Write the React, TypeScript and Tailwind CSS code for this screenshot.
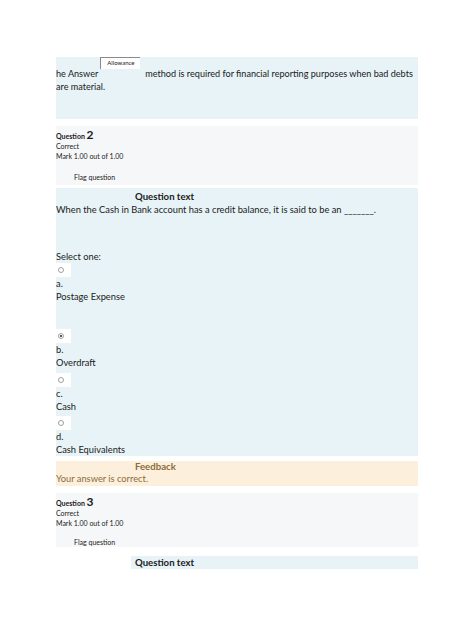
import React from "react";

const font = { fontFamily: "Lato, 'Open Sans', sans-serif" };

function Info({ n, flagTop, bottom }: { n: number; flagTop: string; bottom: string }) {
  return (
    <div className={`bg-[#f6f7f8] pt-[3px] text-[#1a1a1a] ${bottom}`}>
      <div className="flex h-[12px] items-baseline leading-[12px]">
        <span className="text-[7px] font-bold">Question&nbsp;</span>
        <span className="text-[12px] font-bold">{n}</span>
      </div>
      <div className="text-[7px] leading-[10px]">Correct</div>
      <div className="text-[7px] leading-[10px]">Mark 1.00 out of 1.00</div>
      <div className={`pl-[18px] text-[7px] leading-[10px] ${flagTop}`}>Flag question</div>
    </div>
  );
}

function Radio({ checked }: { checked?: boolean }) {
  return (
    <div className="flex h-[14px] w-[15px] items-center bg-white pl-[2px]">
      <span className="flex h-[6px] w-[6px] items-center justify-center rounded-full border border-[#a0a0a0] bg-white">
        {checked && <span className="h-[2px] w-[2px] rounded-full bg-[#222]" />}
      </span>
    </div>
  );
}

function Option({ letter, label, checked, gap }: { letter: string; label: string; checked?: boolean; gap: string }) {
  return (
    <div className={gap}>
      <Radio checked={checked} />
      <div className="leading-[13px]">{letter}.</div>
      <div className="leading-[13px]">{label}</div>
    </div>
  );
}

export default function App() {
  return (
    <div className="min-h-[632px] w-[474px] bg-white text-[9.3px] text-[#1a1a1a]" style={font}>
      <div className="ml-[56px] w-[362px] pt-[57px]">
        <div className="h-[62px] bg-[#e7f3f6] text-[9.1px] leading-[13px]">
          he Answer
          <span className="ml-[2px] mr-[5px] inline-block w-[40px] border-l border-t border-[#8a8a8a] bg-white pb-[3px] pl-[6px] pt-[1px] align-[12px] text-[6px] leading-[7px]">
            Allowance
          </span>
          method is required for financial reporting purposes when bad debts are material.
        </div>

        <div className="mt-[7px]">
          <Info n={2} flagTop="pt-[11px]" bottom="pb-[3px]" />
        </div>

        <div className="mt-[3px] h-[268px] bg-[#e7f3f6]">
          <div className="pl-[79px] pt-[2px] text-[9.6px] font-bold leading-[13px]">Question text</div>
          <div className="leading-[13px]">
            When the Cash in Bank account has a credit balance, it is said to be an _______.
          </div>
          <div className="mt-[34px] leading-[13px]">Select one:</div>
          <Option letter="a" label="Postage Expense" gap="mt-[0px]" />
          <Option letter="b" label="Overdraft" checked gap="mt-[26px]" />
          <Option letter="c" label="Cash" gap="mt-[4px]" />
          <Option letter="d" label="Cash Equivalents" gap="mt-[3px]" />
        </div>

        <div className="mt-[5px] h-[25px] bg-[#fcefdc] text-[#8a6d3b]">
          <div className="pl-[79px] text-[9.6px] font-bold leading-[12px]">Feedback</div>
          <div className="leading-[12px]">Your answer is correct.</div>
        </div>

        <div className="mt-[7px]">
          <Info n={3} flagTop="pt-[9px]" bottom="pb-[0px]" />
        </div>

        <div className="ml-[75px] mt-[9px] h-[13px] bg-[#e7f3f6] pl-[4px] text-[9.6px] font-bold leading-[13px]">
          Question text
        </div>
      </div>
    </div>
  );
}
